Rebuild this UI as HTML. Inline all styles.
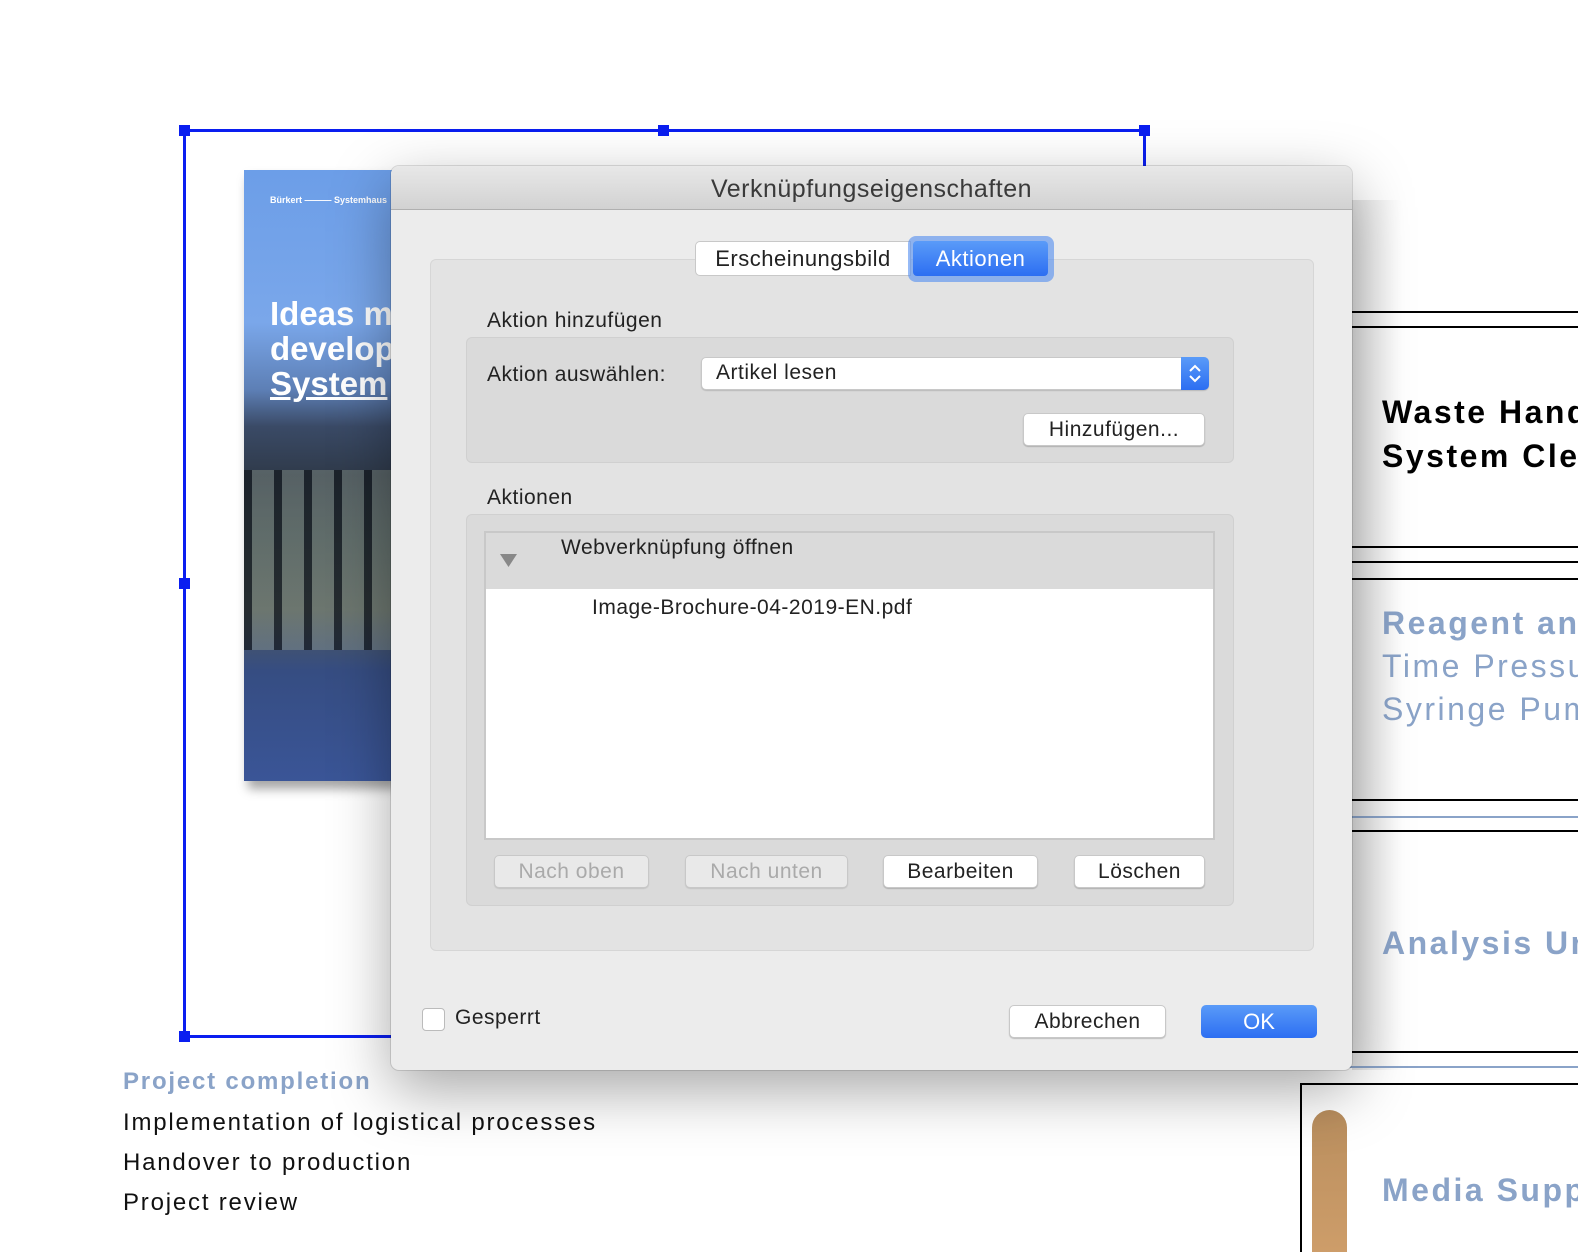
<!DOCTYPE html>
<html><head><meta charset="utf-8"><style>
*{margin:0;padding:0;box-sizing:border-box}
body{width:1578px;height:1252px;background:#fff;position:relative;overflow:hidden;font-family:"Liberation Sans",sans-serif}
.a{position:absolute}
.ln{position:absolute;height:2px;background:#000;left:52px;width:226px}
.bl{background:#8aa3c8}
.rt{position:absolute;left:82px;font-size:32px;white-space:nowrap;letter-spacing:2.5px}
.h{position:absolute;width:11px;height:11px;background:#0a1ef0}
.btn{position:absolute;height:33px;background:#fff;border:1px solid #c8c8c8;border-radius:5px;box-shadow:0 1px 1px rgba(0,0,0,.2);font-size:21px;text-align:center;line-height:31px;color:#222;letter-spacing:.5px}
.dis{background:#e9e9e9;color:#aaa;box-shadow:0 1px 1px rgba(0,0,0,.1)}
.t{position:absolute;font-size:21px;color:#222;white-space:nowrap;letter-spacing:.5px}
.bt{position:absolute;left:123px;font-size:24px;color:#111;letter-spacing:1.8px}
</style></head><body>
<!-- right side doc -->
<div class="a" style="left:1300px;top:0;width:278px;height:1252px;overflow:hidden">
<div class="a" style="left:52px;top:200px;width:50px;height:870px;background:linear-gradient(90deg,#e2e2e2,rgba(255,255,255,0))"></div>
<div class="ln" style="top:311px"></div><div class="ln" style="top:326px"></div>
<div class="rt" style="top:394px;font-weight:bold;color:#000">Waste Handling</div>
<div class="rt" style="top:438px;font-weight:bold;color:#000">System Cleaning</div>
<div class="ln" style="top:546px"></div><div class="ln" style="top:561px"></div><div class="ln" style="top:578px"></div>
<div class="rt" style="top:605px;font-weight:bold;color:#8aa3c8">Reagent and</div>
<div class="rt" style="top:648px;color:#8aa3c8">Time Pressure</div>
<div class="rt" style="top:691px;color:#8aa3c8">Syringe Pump</div>
<div class="ln" style="top:799px"></div><div class="ln bl" style="top:816px"></div><div class="ln" style="top:830px"></div>
<div class="rt" style="top:925px;font-weight:bold;color:#8aa3c8">Analysis Unit</div>
<div class="ln" style="top:1051px"></div><div class="ln bl" style="top:1066px;left:40px;width:238px"></div>
<div class="a" style="left:0;top:1083px;width:300px;height:200px;border:2px solid #000"></div>
<div class="a" style="left:12px;top:1110px;width:35px;height:160px;border-radius:18px 18px 0 0;background:linear-gradient(#b98e5e,#d09f6b)"></div>
<div class="rt" style="top:1172px;font-weight:bold;color:#8aa3c8">Media Supply</div>
</div>
<!-- bottom left text -->
<div class="a" style="left:123px;top:1068px;font-size:24px;font-weight:bold;color:#8aa3c8;letter-spacing:1.8px">Project completion</div>
<div class="bt" style="top:1109px">Implementation of logistical processes</div>
<div class="bt" style="top:1149px">Handover to production</div>
<div class="bt" style="top:1189px">Project review</div>
<!-- brochure -->
<div class="a" style="left:244px;top:170px;width:150px;height:611px;box-shadow:4px 8px 10px rgba(0,0,0,.35);background:linear-gradient(180deg,#6c9ee8 0%,#7aa7ea 25%,#5d7fb5 36%,#3a4a66 42%,#2f3a4a 50%,#3d4b52 60%,#505a5a 72%,#364d82 82%,#3a5597 100%);overflow:hidden">
<div class="a" style="left:0;top:300px;width:150px;height:180px;background:repeating-linear-gradient(90deg,rgba(20,25,30,.7) 0 8px,rgba(160,170,150,.35) 8px 30px)"></div>
<div class="a" style="left:26px;top:25px;font-size:9px;font-weight:bold;color:#fff;white-space:nowrap">Bürkert ——— Systemhaus</div>
<div class="a" style="left:26px;top:126px;font-size:33px;line-height:35px;font-weight:bold;color:#fff;white-space:nowrap">Ideas m<br>develop<br><u>System</u></div>
</div>
<!-- selection frame -->
<div class="a" style="left:184px;top:129px;width:962px;height:3px;background:#0a1ef0"></div>
<div class="a" style="left:183px;top:129px;width:3px;height:909px;background:#0a1ef0"></div>
<div class="a" style="left:183px;top:1035px;width:210px;height:3px;background:#0a1ef0"></div>
<div class="a" style="left:1143px;top:129px;width:3px;height:40px;background:#0a1ef0"></div>
<div class="h" style="left:179px;top:125px"></div><div class="h" style="left:658px;top:125px"></div><div class="h" style="left:1139px;top:125px"></div>
<div class="h" style="left:179px;top:578px"></div><div class="h" style="left:179px;top:1031px"></div>
<!-- dialog -->
<div class="a" style="left:391px;top:166px;width:961px;height:904px;background:#ececec;border-radius:8px;box-shadow:0 20px 60px rgba(0,0,0,.35),0 0 0 1px rgba(0,0,0,.12);overflow:hidden">
<div class="a" style="left:0;top:0;width:961px;height:44px;background:linear-gradient(#e8e8e8,#d2d2d2);border-bottom:1px solid #b0b0b0;text-align:center;font-size:25px;line-height:46px;color:#3a3a3a;letter-spacing:.5px">Verknüpfungseigenschaften</div>
<div class="a" style="left:39px;top:93px;width:884px;height:692px;background:#e3e3e3;border:1px solid #d6d6d6;border-radius:6px"></div>
<div class="a" style="left:304px;top:75px;width:216px;height:35px;background:#fff;border:1px solid #c8c8c8;border-radius:5px 0 0 5px;font-size:22px;line-height:33px;text-align:center;color:#222;letter-spacing:.5px">Erscheinungsbild</div>
<div class="a" style="left:517px;top:70px;width:146px;height:46px;background:rgba(80,140,240,.6);border-radius:8px"></div>
<div class="a" style="left:522px;top:75px;width:135px;height:35px;background:linear-gradient(#5a9bf8,#2c6ef2);border-radius:4px;font-size:22px;line-height:35px;text-align:center;color:#fff;letter-spacing:.5px">Aktionen</div>
<div class="t" style="left:96px;top:143px">Aktion hinzufügen</div>
<div class="a" style="left:75px;top:171px;width:768px;height:126px;background:#dadada;border:1px solid #d0d0d0;border-radius:6px"></div>
<div class="t" style="left:96px;top:197px">Aktion auswählen:</div>
<div class="a" style="left:310px;top:191px;width:508px;height:33px;background:#fff;border:1px solid #c8c8c8;border-radius:5px;box-shadow:0 1px 1px rgba(0,0,0,.15)"></div>
<div class="t" style="left:325px;top:195px">Artikel lesen</div>
<div class="a" style="left:790px;top:191px;width:28px;height:33px;background:linear-gradient(#5a9bf8,#2c6ef2);border-radius:0 5px 5px 0"><svg width="28" height="33"><path d="M9 14l5-5 5 5M9 19l5 5 5-5" stroke="#fff" stroke-width="2" fill="none"/></svg></div>
<div class="btn" style="left:632px;top:247px;width:182px">Hinzufügen...</div>
<div class="t" style="left:96px;top:320px">Aktionen</div>
<div class="a" style="left:75px;top:348px;width:768px;height:392px;background:#dadada;border:1px solid #d0d0d0;border-radius:6px"></div>
<div class="a" style="left:93px;top:365px;width:731px;height:309px;background:#fff;border:2px solid #c8c8c8"></div>
<div class="a" style="left:95px;top:367px;width:727px;height:56px;background:#dadada"></div>
<svg class="a" style="left:108px;top:387px" width="20" height="16"><path d="M1 1h17l-8.5 13z" fill="#888"/></svg>
<div class="t" style="left:170px;top:370px">Webverknüpfung öffnen</div>
<div class="t" style="left:201px;top:430px">Image-Brochure-04-2019-EN.pdf</div>
<div class="btn dis" style="left:103px;top:689px;width:155px">Nach oben</div>
<div class="btn dis" style="left:294px;top:689px;width:163px">Nach unten</div>
<div class="btn" style="left:492px;top:689px;width:155px">Bearbeiten</div>
<div class="btn" style="left:683px;top:689px;width:131px">Löschen</div>
<div class="a" style="left:31px;top:842px;width:23px;height:23px;background:#fff;border:1px solid #bbb;border-radius:4px"></div>
<div class="t" style="left:64px;top:840px">Gesperrt</div>
<div class="btn" style="left:618px;top:839px;width:157px">Abbrechen</div>
<div class="a" style="left:810px;top:839px;width:116px;height:33px;background:linear-gradient(#5a9bf8,#2c6ef2);border-radius:5px;font-size:22px;line-height:33px;text-align:center;color:#fff">OK</div>
</div>
</body></html>
